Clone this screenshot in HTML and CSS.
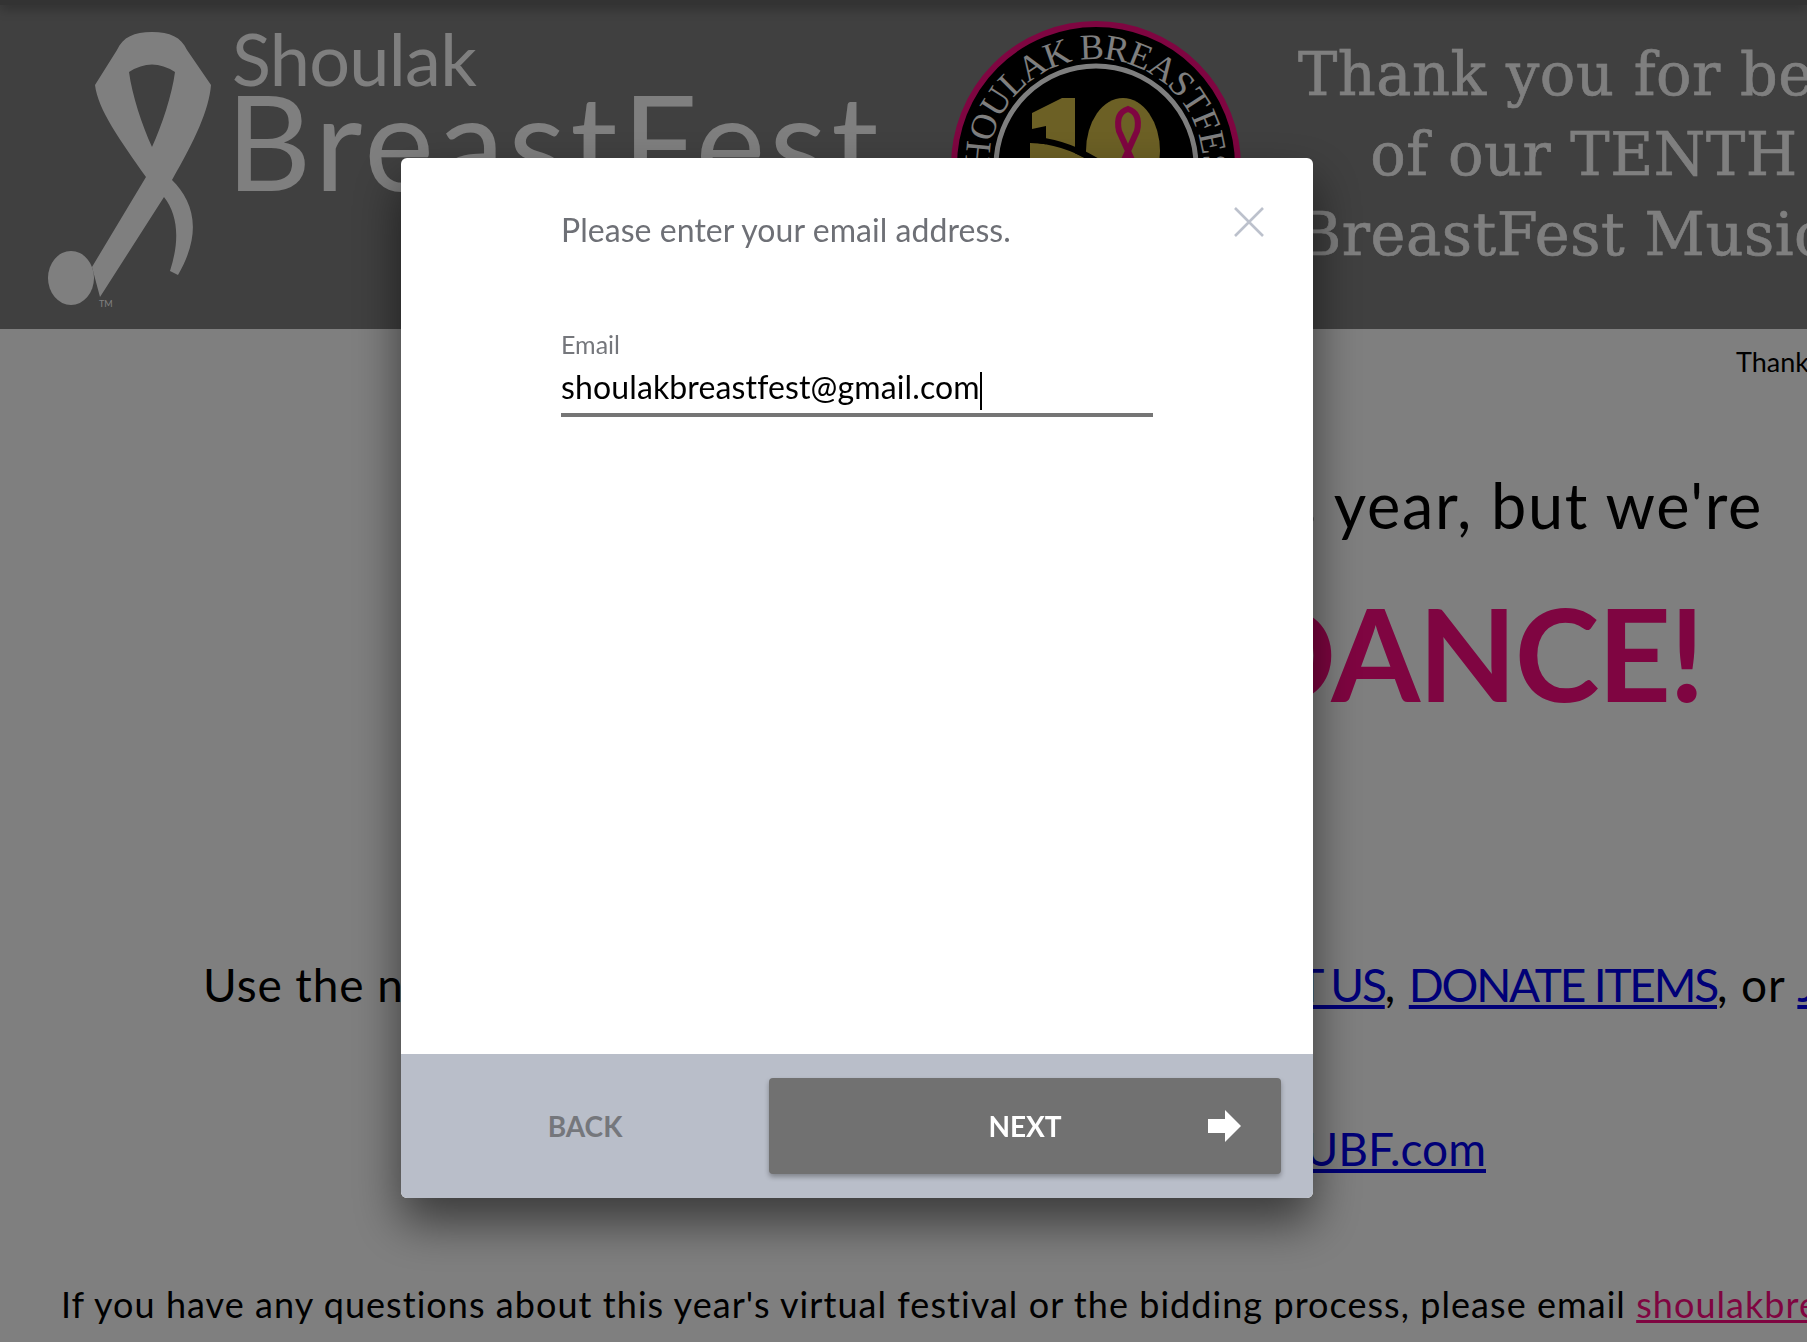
FILE: index.html
```html
<!DOCTYPE html>
<html lang="en">
<head>
    <meta charset="UTF-8">
    <title>Shoulak BreastFest</title>
    <link rel="stylesheet" href="styles.css">
</head>
<body>
    <div class="top-bar"></div>
    <header class="banner">
        <svg class="ribbon" viewBox="0 0 230 324" width="230" height="324">
            <path fill="#fff" fill-rule="evenodd" d="M152 27C170 27 181 32 187 45L211 80C209 105 195 135 172 175C192 195 204 225 178 270L170 266C180 235 178 210 164 192L100 292L92 262L146 172C120 135 98 105 95 80L117 45C123 32 134 27 152 27ZM129 67Q152 52 175 67C172 90 162 120 152 142C142 120 132 90 129 67Z"/>
            <ellipse fill="#fff" cx="71" cy="273" rx="23" ry="27"/>
            <text class="ribbon-tm" x="99" y="302">TM</text>
        </svg>
        <div class="wordmark">
            <div class="wordmark-top">Shoulak</div>
            <div class="wordmark-main">BreastFest</div>
        </div>
        <svg class="seal" viewBox="0 0 290 290" width="290" height="290">
            <defs>
                <path id="seal-arc" d="M145 252a107 107 0 1 1 0 -214a107 107 0 1 1 0 214"/>
            </defs>
            <circle cx="145" cy="145" r="142" fill="#000" stroke="#ff0a82" stroke-width="6"/>
            <circle cx="145" cy="145" r="100" fill="none" stroke="#fff" stroke-width="5"/>
            <text class="seal-text"><textPath href="#seal-arc" startOffset="147">SHOULAK BREASTFEST MUSIC FESTIVAL</textPath></text>
            <path fill="#d8c04a" d="M81 92L111 77H124V190H95V105L81 108Z"/>
            <ellipse fill="#d8c04a" cx="172" cy="130" rx="37" ry="53"/>
            <path fill="#d8c04a" d="M79 122Q110 122 142 142L134 170H79Z"/>
            <path fill="none" stroke="#000" stroke-width="6" d="M79 119Q110 119 146 140"/>
            <path fill="none" stroke="#ff0a82" stroke-width="6" d="M168 150L186 110Q190 92 177 88Q164 92 168 110L186 150"/>
        </svg>
        <div class="tagline">
            Thank you for being an<br>of our TENTH fest<br>BreastFest Music Festival
        </div>
    </header>

    <main class="page">
        <div class="ticker">Thank you for supporting the festival!</div>
        <p class="line-large">We can't be together this year, but we're</p>
        <p class="line-huge">still going to DANCE!</p>
        <p class="line-nav">Use the navigation menu above to BID ON, <a href="#">CONTACT US</a>, <a href="#">DONATE ITEMS</a>, or <a href="#">JOIN</a></p>
        <p class="line-site">Visit us at <a href="#">ShoulakUBF.com</a></p>
        <p class="line-small">If you have any questions about this year's virtual festival or the bidding process, please email <a class="pink" href="#">shoulakbreastfest@gmail.com</a></p>
    </main>

    <div class="backdrop"></div>

    <div class="modal">
        <div class="modal-body">
            <div class="modal-title">Please enter your email address.</div>
            <button class="close-btn" aria-label="Close">
                <svg viewBox="0 0 30 30" width="30" height="30"><path d="M1 1L29 29M29 1L1 29" fill="none" stroke="#bcc1cc" stroke-width="2.6"/></svg>
            </button>
            <label class="field-label">Email</label>
            <div class="field-input">shoulakbreastfest@gmail.com<span class="caret"></span></div>
        </div>
        <div class="modal-footer">
            <button class="back-btn">BACK</button>
            <button class="next-btn">
                NEXT
                <svg class="next-arrow" viewBox="0 0 33 32" width="33" height="32"><path d="M0 9H17V0L33 16L17 32V23H0Z" fill="#fff"/></svg>
            </button>
        </div>
    </div>
</body>
</html>
```

FILE: styles.css
```css
html, body {
    margin: 0;
    padding: 0;
    height: 100%;
    overflow: hidden;
}

body {
    background: #fff;
    color: #000;
    font-family: 'Lato', sans-serif;
}

.top-bar {
    height: 5px;
    background: #666;
    box-shadow: 0 2px 12px rgba(0, 0, 0, 0.5);
    position: relative;
}

.banner {
    display: flex;
    height: 324px;
    background: #808080;
    color: #fff;
    overflow: hidden;
}

.ribbon {
    flex: none;
    margin-right: 4px;
}

.ribbon-tm {
    font-size: 9px;
    fill: #fff;
}

.wordmark {
    flex: none;
    width: 717px;
}

.wordmark-top {
    font-size: 72px;
    line-height: 72px;
    margin-top: 17px;
    margin-left: -2px;
    letter-spacing: -0.7px;
}

.wordmark-main {
    font-size: 132px;
    line-height: 110px;
    margin-top: -9px;
    margin-left: -8px;
    letter-spacing: 4.5px;
}

.seal {
    flex: none;
    margin-top: 16px;
    margin-right: 57px;
}

.seal-text {
    font-family: 'Liberation Serif', serif;
    font-size: 36px;
    fill: #fff;
    letter-spacing: -1px;
}

.tagline {
    flex: none;
    width: 704px;
    margin-top: 30px;
    text-align: center;
    font-family: 'DejaVu Serif', serif;
    font-size: 59px;
    line-height: 80px;
    letter-spacing: 0.5px;
    -webkit-text-stroke: 0.6px #fff;
    white-space: nowrap;
}

.page {
    display: flex;
    flex-direction: column;
    align-items: flex-start;
    width: 1807px;
    white-space: nowrap;
}

.page p {
    margin: 0;
}

.page a {
    color: #0000ee;
}

.page a.pink {
    color: #ff0a82;
}

.ticker {
    margin-left: 1736px;
    margin-top: 14px;
    font-size: 27px;
    line-height: 38px;
}

.page .line-large {
    align-self: flex-end;
    margin: 86px 44px 0 0;
    font-size: 63px;
    line-height: 76px;
    letter-spacing: 1.7px;
}

.page .line-huge {
    align-self: flex-end;
    margin: 30px 104px 0 0;
    color: #ff0a82;
    font-weight: 700;
    font-size: 128px;
    line-height: 160px;
    letter-spacing: -2px;
}

.page .line-nav {
    margin: 222px 0 0 203px;
    font-size: 46px;
    line-height: 60px;
    letter-spacing: 0.9px;
}

.page .line-nav a {
    letter-spacing: -2.2px;
}

.page .line-site {
    align-self: flex-end;
    margin: 104px 321px 0 0;
    font-size: 46px;
    line-height: 60px;
}

.page .line-small {
    margin: 101px 0 0 61px;
    font-size: 36px;
    line-height: 48px;
    letter-spacing: 1.05px;
}

.backdrop {
    position: fixed;
    inset: 0;
    background: rgba(0, 0, 0, 0.5);
}

.modal {
    position: fixed;
    left: 401px;
    top: 158px;
    width: 912px;
    height: 1040px;
    display: flex;
    flex-direction: column;
    background: #fff;
    border-radius: 6px;
    box-shadow: 0 24px 48px rgba(0, 0, 0, 0.55);
    overflow: hidden;
}

.modal-body {
    flex: 1;
    padding: 50px 160px 0;
    position: relative;
}

.modal-title {
    font-size: 32px;
    line-height: 44px;
    letter-spacing: 0.05px;
    color: #6e7076;
}

.close-btn {
    position: absolute;
    top: 49px;
    right: 49px;
    padding: 0;
    border: none;
    background: none;
    cursor: pointer;
}

.field-label {
    display: block;
    margin-top: 77px;
    font-size: 25px;
    line-height: 30px;
    color: #75777c;
}

.field-input {
    margin-top: 3px;
    height: 51px;
    line-height: 49px;
    font-size: 32px;
    letter-spacing: 0.13px;
    color: #000;
    border-bottom: 4px solid #757575;
}

.caret {
    display: inline-block;
    width: 2px;
    height: 38px;
    background: #000;
    vertical-align: middle;
}

.modal-footer {
    flex: none;
    display: flex;
    align-items: center;
    height: 144px;
    padding-right: 32px;
    background: #b9bec9;
}

.back-btn {
    width: 368px;
    border: none;
    background: none;
    font-family: 'Lato', sans-serif;
    font-weight: 700;
    font-size: 28px;
    color: #75777c;
    cursor: pointer;
}

.next-btn {
    position: relative;
    width: 512px;
    height: 96px;
    border: none;
    border-radius: 4px;
    background: #717171;
    box-shadow: 0 3px 5px rgba(0, 0, 0, 0.3);
    font-family: 'Lato', sans-serif;
    font-weight: 700;
    font-size: 28px;
    color: #fff;
    cursor: pointer;
}

.next-arrow {
    position: absolute;
    right: 40px;
    top: 32px;
}
```
